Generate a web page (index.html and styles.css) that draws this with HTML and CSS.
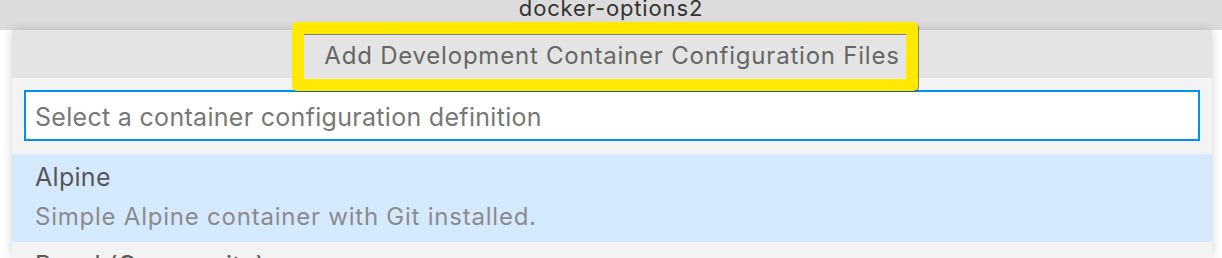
FILE: index.html
```html
<!DOCTYPE html>
<html>
<head>
<meta charset="utf-8">
<link rel="stylesheet" href="styles.css">
</head>
<body>
  <div class="titlebar"><span class="window-title">docker-options2</span></div>
  <div class="quick-input">
    <div class="qi-header">
      <span class="qi-title">Add Development Container Configuration Files</span>
      <div class="highlight"></div>
    </div>
    <div class="qi-body">
      <div class="qi-box">
        <div class="qi-input">Select a container configuration definition</div>
      </div>
      <div class="qi-list">
        <div class="qi-item selected">
          <div class="qi-label">Alpine</div>
          <div class="qi-desc">Simple Alpine container with Git installed.</div>
        </div>
        <div class="qi-item">
          <div class="qi-label">Bazel (Community)</div>
          <div class="qi-desc">Bazel container for building projects.</div>
        </div>
      </div>
    </div>
  </div>
</body>
</html>
```

FILE: styles.css
```css
html, body {
  margin: 0;
  padding: 0;
  background: #ffffff;
  width: 1222px;
  height: 258px;
  overflow: hidden;
  font-family: Inter, "Noto Sans", "DejaVu Sans", sans-serif;
}

.titlebar {
  height: 30px;
  background: #dcdcdc;
  display: flex;
  justify-content: center;
  align-items: flex-start;
  overflow: hidden;
}

.window-title {
  font-size: 22px;
  letter-spacing: 0.85px;
  line-height: 22px;
  margin-top: -3px;
  color: #333333;
}

.quick-input {
  margin-left: 12px;
  width: 1200px;
  background: #f3f3f3;
  box-shadow: 0 0 10px rgba(0, 0, 0, 0.18);
  position: relative;
  height: 228px;
}

.qi-header {
  height: 48px;
  background: #e4e4e4;
  display: flex;
  justify-content: center;
  align-items: center;
  position: relative;
}

.qi-title {
  font-size: 24px;
  letter-spacing: 0.78px;
  color: #666666;
  line-height: 30px;
  margin-top: 3px;
}

.highlight {
  position: absolute;
  left: 280px;
  top: -8px;
  width: 602px;
  height: 45px;
  border: 12px solid #ffe900;
  border-radius: 5px;
  box-shadow: inset 0 1px 0 #7c7c7c, inset 0 -1px 0 #f2f2f2, 1px 1px 0 rgba(60, 60, 40, 0.6);
}

.qi-body {
  padding-top: 12px;
}

.qi-box {
  padding: 0 12px 13px 12px;
}

.qi-input {
  height: 47px;
  border: 2px solid #0091f0;
  background: #ffffff;
  font-size: 25px;
  letter-spacing: 0.3px;
  line-height: 47px;
  padding-top: 2px;
  box-sizing: border-box;
  height: 51px;
  padding-left: 9px;
  color: #777777;
}

.qi-item {
  height: 88px;
  padding-left: 23px;
  display: flex;
  flex-direction: column;
}

.qi-item.selected {
  background: #d6eaff;
}

.qi-label {
  font-size: 25px;
  letter-spacing: 0.3px;
  color: #575757;
  line-height: 30px;
  margin-top: 8px;
}

.qi-desc {
  font-size: 24px;
  letter-spacing: 0.77px;
  color: #8b8b8b;
  line-height: 30px;
  margin-top: 10px;
}
```
